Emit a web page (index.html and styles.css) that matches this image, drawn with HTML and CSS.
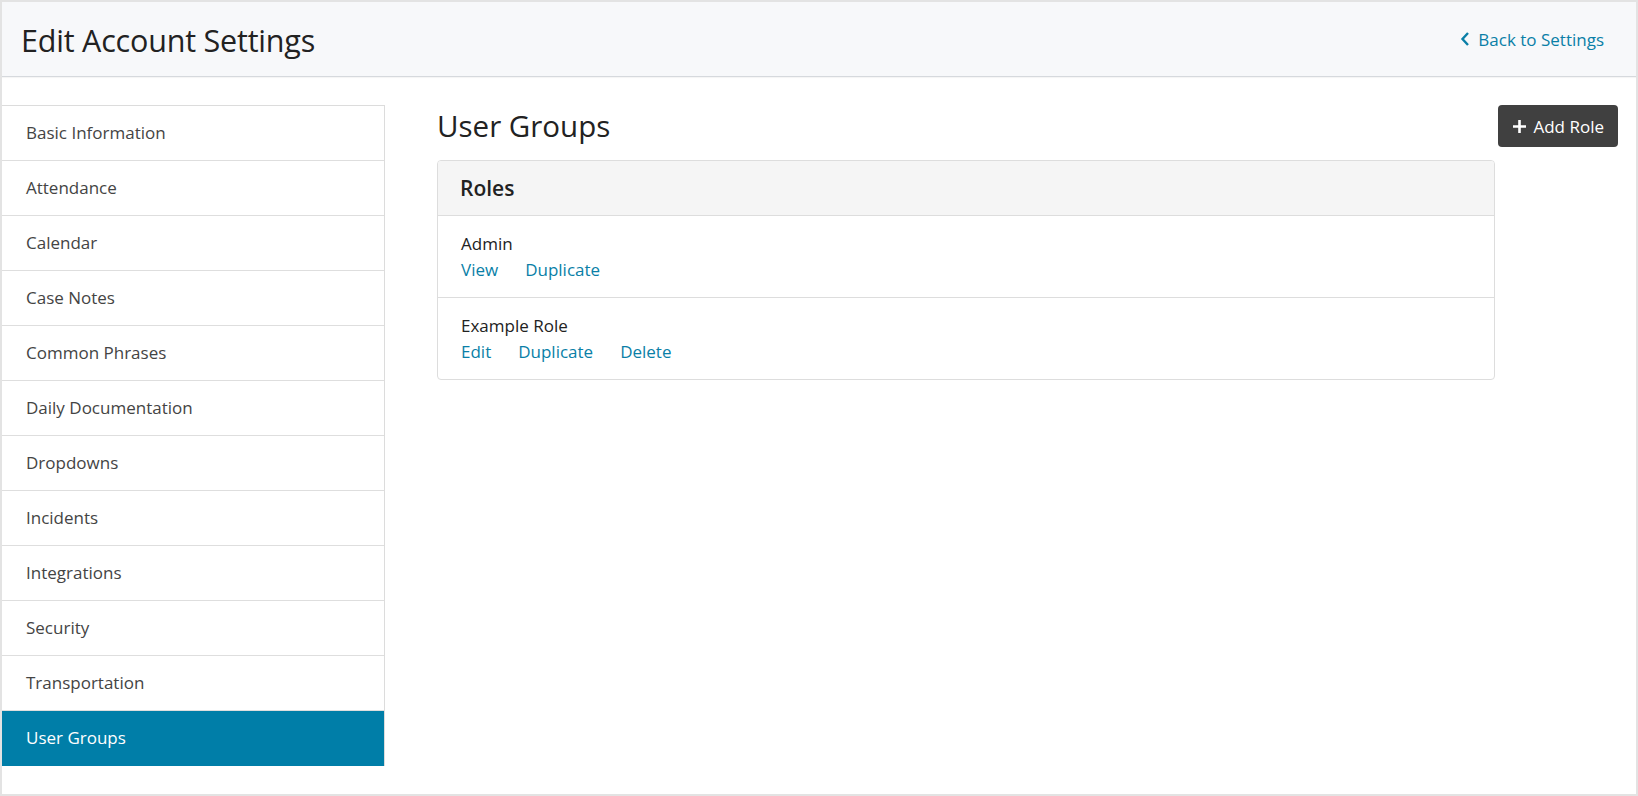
FILE: index.html
```html
<!DOCTYPE html>
<html lang="en">
<head>
<meta charset="utf-8">
<title>Edit Account Settings</title>
<link rel="stylesheet" href="styles.css">
</head>
<body>
<div class="frame">
  <header class="page-header">
    <h1 class="page-title">Edit Account Settings</h1>
    <a class="back-link" href="#">
      <svg class="chev" width="10" height="16" viewBox="0 0 10 16"><path d="M8 2 L2.5 8 L8 14" fill="none" stroke="currentColor" stroke-width="2.4"/></svg>
      Back to Settings
    </a>
  </header>
  <div class="layout">
    <nav class="side-nav">
      <a class="nav-item" href="#">Basic Information</a>
      <a class="nav-item" href="#">Attendance</a>
      <a class="nav-item" href="#">Calendar</a>
      <a class="nav-item" href="#">Case Notes</a>
      <a class="nav-item" href="#">Common Phrases</a>
      <a class="nav-item" href="#">Daily Documentation</a>
      <a class="nav-item" href="#">Dropdowns</a>
      <a class="nav-item" href="#">Incidents</a>
      <a class="nav-item" href="#">Integrations</a>
      <a class="nav-item" href="#">Security</a>
      <a class="nav-item" href="#">Transportation</a>
      <a class="nav-item active" href="#">User Groups</a>
    </nav>
    <main class="content">
      <div class="content-head">
        <h2 class="section-title">User Groups</h2>
        <button class="btn-add" type="button">
          <svg class="plus" width="15" height="15" viewBox="0 0 15 15"><path d="M7.5 1 V14 M1 7.5 H14" stroke="currentColor" stroke-width="2.6"/></svg>
          Add Role
        </button>
      </div>
      <section class="card">
        <div class="card-header">Roles</div>
        <div class="role-row">
          <div class="role-name">Admin</div>
          <div class="role-actions"><a href="#">View</a><a href="#">Duplicate</a></div>
        </div>
        <div class="role-row">
          <div class="role-name">Example Role</div>
          <div class="role-actions"><a href="#">Edit</a><a href="#">Duplicate</a><a href="#">Delete</a></div>
        </div>
      </section>
    </main>
  </div>
</div>
</body>
</html>
```
FILE: styles.css
```css
* { box-sizing: border-box; }
html, body { margin: 0; padding: 0; }
body {
  font-family: "Open Sans", "Noto Sans", "Liberation Sans", sans-serif;
  color: #212529;
  background: #fff;
}
a { text-decoration: none; color: #0a7fa7; }

.frame {
  width: 1638px;
  height: 796px;
  border: 2px solid #e3e3e3;
  display: flex;
  flex-direction: column;
  overflow: hidden;
}

.page-header {
  height: 75px;
  flex: none;
  background: #f7f8fa;
  border-bottom: 1px solid #d6d9dd;
  box-shadow: 0 1px 1px rgba(0,0,0,0.04);
  display: flex;
  align-items: center;
  justify-content: space-between;
  padding: 0 32px 0 19px;
}
.page-title {
  margin: 0;
  font-size: 30.5px;
  font-weight: 400;
  color: #222;
  letter-spacing: -0.2px;
  position: relative;
  top: 1px;
}
.back-link {
  display: flex;
  align-items: center;
  gap: 8px;
  font-size: 17px;
  color: #0a7fa7;
}
.chev { display: block; }

.layout {
  display: flex;
  padding-top: 28px;
  padding-right: 18px;
  flex: 1;
}

.side-nav {
  width: 383px;
  flex: none;
  border-top: 1px solid #dcdcdc;
  border-right: 1px solid #dcdcdc;
  display: flex;
  flex-direction: column;
  align-self: flex-start;
}
.nav-item {
  display: block;
  height: 55px;
  line-height: 54px;
  padding-left: 24px;
  font-size: 17px;
  color: #444;
  border-bottom: 1px solid #dedede;
}
.nav-item.active {
  background: #007ea8;
  color: #fff;
  border-bottom-color: #007ea8;
}

.content {
  flex: 1;
  padding-left: 52px;
}
.content-head {
  display: flex;
  justify-content: space-between;
  align-items: flex-start;
  height: 55px;
}
.section-title {
  margin: 0;
  font-size: 29.5px;
  font-weight: 400;
  color: #222;
  line-height: 40px;
  position: relative;
  top: 1px;
}
.btn-add {
  display: flex;
  align-items: center;
  gap: 6px;
  height: 42px;
  padding: 0 14px 0 14px;
  background: #404040;
  color: #fff;
  border: none;
  border-radius: 4px;
  font-family: inherit;
  font-size: 17px;
}
.plus { display: block; }

.card {
  width: 1058px;
  border: 1px solid #dddddd;
  border-radius: 4px;
  overflow: hidden;
}
.card-header {
  height: 55px;
  background: #f5f5f5;
  border-bottom: 1px solid #dddddd;
  padding-left: 22px;
  font-size: 21px;
  font-weight: 600;
  line-height: 54px;
  color: #222;
}
.role-row {
  padding: 15px 23px 14px;
  border-bottom: 1px solid #dddddd;
  font-size: 17px;
  line-height: 26px;
}
.role-row:last-child { border-bottom: none; }
.role-name { color: #222; }
.role-actions { display: flex; gap: 27px; }
.role-actions a { color: #0a7fa7; }
```
